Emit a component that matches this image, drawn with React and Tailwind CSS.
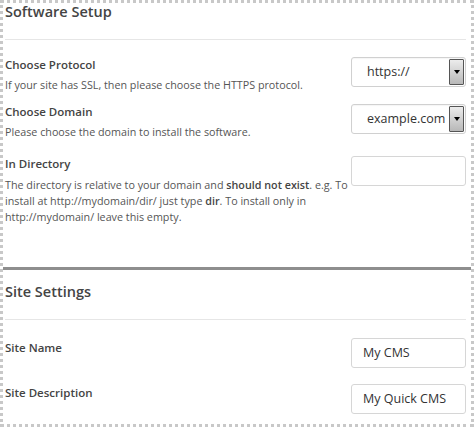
import React from 'react';

const SelectBox = ({ value }) => (
    <div className="w-[115px] h-[30px] border border-[#d0d0d0] rounded-[3px] bg-white flex items-center shadow-[inset_0_1px_1px_rgba(0,0,0,0.04)]">
        <span className="flex-1 pl-[15px] text-[12.5px] text-[#333] whitespace-nowrap overflow-hidden">{value}</span>
        <span className="w-[15px] h-[26px] mr-[1px] border border-[#555] rounded-[1px] bg-gradient-to-b from-[#ececec] to-[#b8b8b8] flex items-center justify-center">
            <span className="w-0 h-0 border-l-[3px] border-r-[3px] border-t-[4px] border-l-transparent border-r-transparent border-t-black" />
        </span>
    </div>
);

const TextBox = ({ value }) => (
    <div className="w-[115px] h-[30px] border border-[#d6d6d6] rounded-[3px] bg-white flex items-center pl-[11px] text-[12.5px] text-[#333]">
        {value}
    </div>
);

const App = () => {
    return (
        <div
            className="w-[474px] h-[427px] bg-white border-[3px] border-dotted border-[#c8c8c8] overflow-hidden"
            style={{ fontFamily: '"Open Sans", "Liberation Sans", sans-serif' }}
        >
            {/* Software Setup */}
            <section className="pl-[2px] pr-[5px]">
                <h2 className="text-[14.5px] leading-[18px] font-semibold text-[#444] h-[36px]">Software Setup</h2>
                <div className="h-px bg-[#e6e6e6]" />

                <div className="flex justify-between items-start mt-[17px]">
                    <div>
                        <div className="text-[11.5px] leading-[16px] font-semibold text-[#444]">Choose Protocol</div>
                        <div className="text-[10.75px] leading-[16px] text-[#555] mt-[4px]">If your site has SSL, then please choose the HTTPS protocol.</div>
                    </div>
                    <SelectBox value="https://" />
                </div>

                <div className="flex justify-between items-start mt-[11px]">
                    <div>
                        <div className="text-[11.5px] leading-[16px] font-semibold text-[#444]">Choose Domain</div>
                        <div className="text-[10.75px] leading-[16px] text-[#555] mt-[4px]">Please choose the domain to install the software.</div>
                    </div>
                    <SelectBox value="example.com" />
                </div>

                <div className="flex justify-between items-start mt-[16px]">
                    <div className="w-[346px]">
                        <div className="text-[11.5px] leading-[16px] font-semibold text-[#444]">In Directory</div>
                        <div className="text-[10.75px] leading-[16px] text-[#555] mt-[5px]">
                            The directory is relative to your domain and <span className="font-semibold text-[#444]">should not exist</span>. e.g. To install at http://mydomain/dir/ just type <span className="font-semibold text-[#444]">dir</span>. To install only in http://mydomain/ leave this empty.
                        </div>
                    </div>
                    <TextBox value="" />
                </div>
            </section>

            <div className="h-[3px] bg-[#8e8e8e] mt-[42px]" />

            {/* Site Settings */}
            <section className="pl-[2px] pr-[5px]">
                <h2 className="text-[14.5px] leading-[18px] font-semibold text-[#444] mt-[13px] h-[36px]">Site Settings</h2>
                <div className="h-px bg-[#e6e6e6]" />

                <div className="flex justify-between items-start mt-[18px]">
                    <div className="text-[11.5px] leading-[16px] font-semibold text-[#444] mt-[2px]">Site Name</div>
                    <TextBox value="My CMS" />
                </div>
                <div className="flex justify-between items-start mt-[16px]">
                    <div className="text-[11.5px] leading-[16px] font-semibold text-[#444] mt-[1px]">Site Description</div>
                    <TextBox value="My Quick CMS" />
                </div>
            </section>
        </div>
    );
};

export default App;
